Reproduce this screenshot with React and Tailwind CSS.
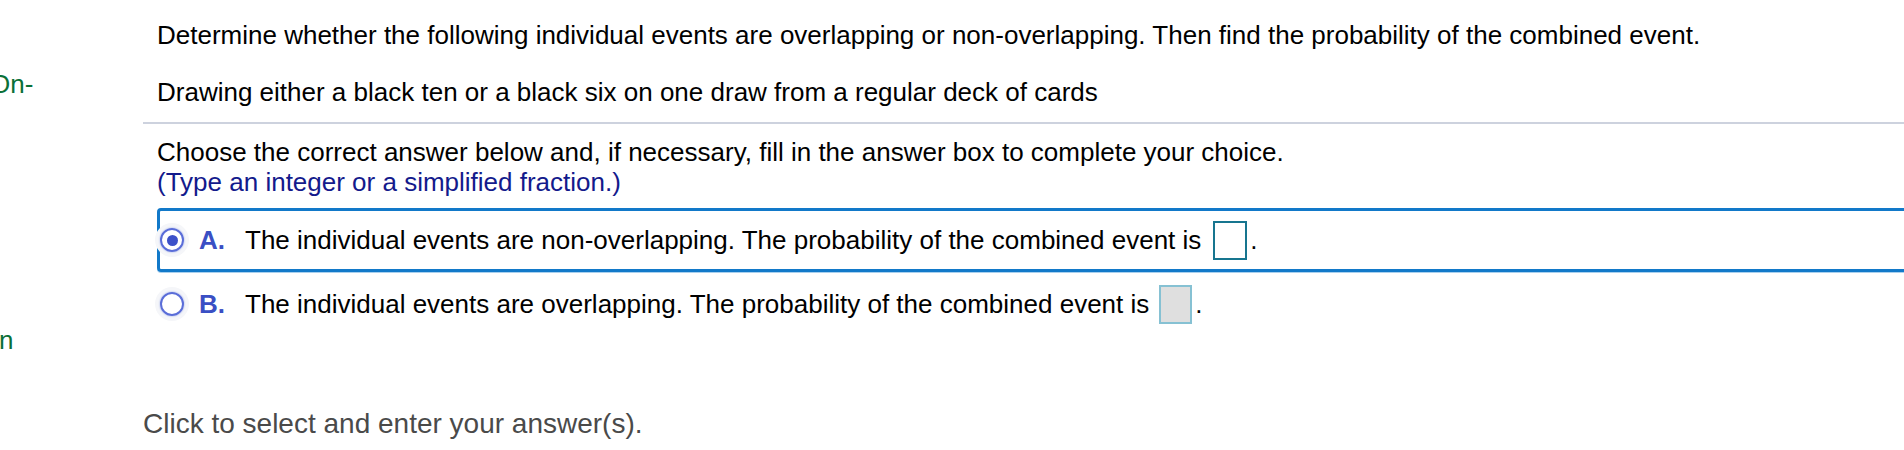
function Radio({ checked }) {
  return (
    <span className="flex h-[24px] w-[24px] shrink-0 items-center justify-center rounded-full border-2 border-[#5a6dd8] shadow-[0_0_2px_#8e9ee6,0_0_0_5px_#f5f6f9]">
      {checked && <span className="h-[11px] w-[11px] rounded-full bg-[#3c51c9]" />}
    </span>
  );
}

function Option({ label, text, selected }) {
  return (
    <div
      className={
        selected
          ? "flex h-[64px] items-center rounded-[4px] border-[3px] border-[#1279c9] -mr-[12px] shadow-[0_1px_0_#a9d0ee]"
          : "flex h-[64px] items-center border-[3px] border-transparent"
      }
    >
      <Radio checked={selected} />
      <span className="ml-[15px] w-[46px] shrink-0 font-bold text-[#3a4fc4]">{label}</span>
      <span>{text}</span>
      {selected ? (
        <span className="ml-[12px] h-[39px] w-[34px] border-2 border-[#17758f] bg-white" />
      ) : (
        <span className="ml-[10px] h-[39px] w-[33px] border-2 border-[#86c1d3] bg-[#dfdfdf]" />
      )}
      <span className="ml-[3px]">.</span>
    </div>
  );
}

export default function App() {
  return (
    <div
      className="flex h-[450px] w-full overflow-hidden bg-white text-[26px] leading-[30px] text-black"
      style={{ fontFamily: '"Liberation Sans", Arial, sans-serif' }}
    >
      {/* side column, clipped */}
      <div className="w-[143px] shrink-0 overflow-hidden text-[#0b7038]">
        <div className="-ml-[10px] mt-[69px]">On-</div>
        <div className="-ml-[1px] mt-[226px]">n</div>
      </div>

      <div className="min-w-0 flex-1">
        <div className="pl-[14px]">
          <div className="mt-[20px]">
            Determine whether the following individual events are overlapping or non-overlapping. Then find the probability of the combined event.
          </div>
          <div className="mt-[27px]">
            Drawing either a black ten or a black six on one draw from a regular deck of cards
          </div>
        </div>

        <div className="mt-[15px] h-[2px] bg-[#cdd2de]" />

        <div className="pl-[14px]">
          <div className="mt-[13px]">
            Choose the correct answer below and, if necessary, fill in the answer box to complete your choice.
          </div>
          <div className="text-[#131a8c]">(Type an integer or a simplified fraction.)</div>

          <div className="mt-[11px]">
            <Option
              label="A."
              selected
              text="The individual events are non-overlapping. The probability of the combined event is"
            />
            <Option
              label="B."
              text="The individual events are overlapping. The probability of the combined event is"
            />
          </div>
        </div>

        <div className="mt-[73px] text-[28px] text-[#4a4a4a]">Click to select and enter your answer(s).</div>
      </div>
    </div>
  );
}
